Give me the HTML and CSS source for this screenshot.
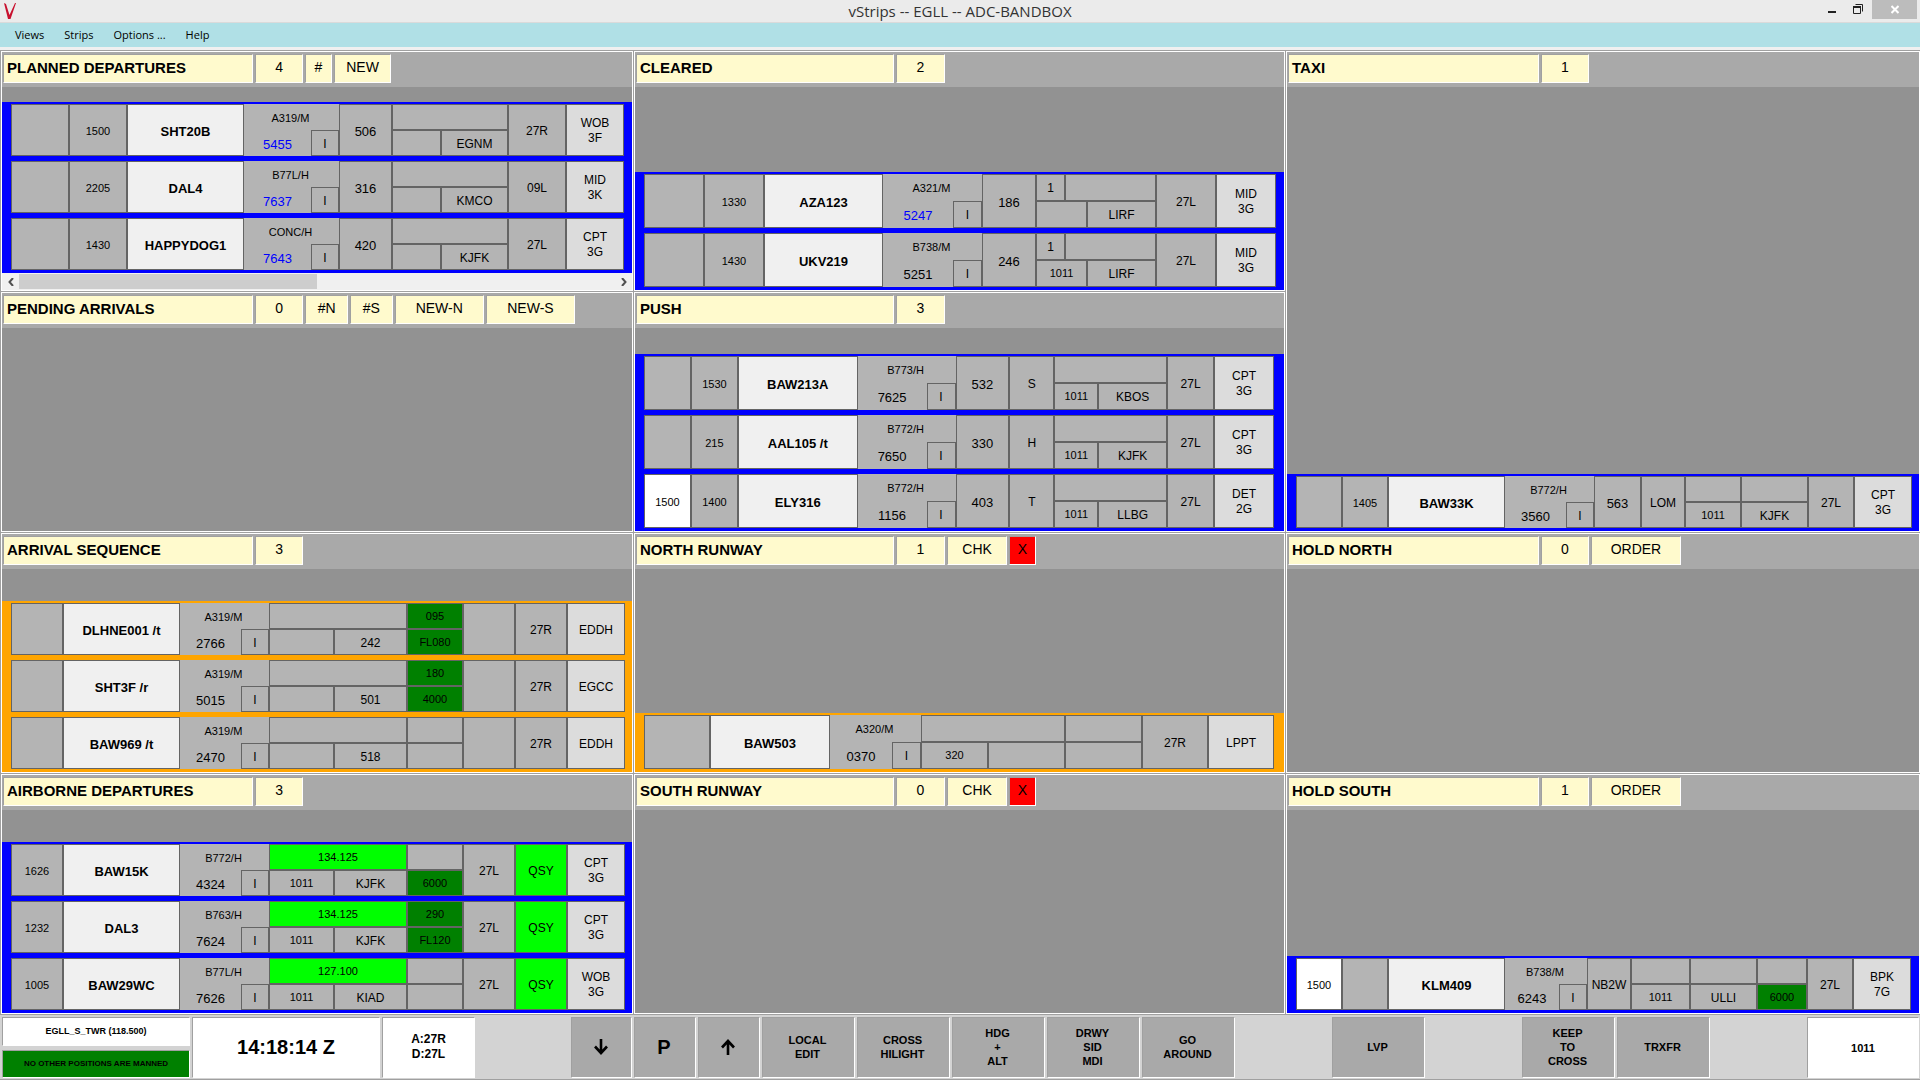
FILE: index.html
```html
<!DOCTYPE html>
<html lang="en">
<head>
<meta charset="utf-8">
<title>vStrips -- EGLL -- ADC-BANDBOX</title>
<link rel="stylesheet" href="styles.css">
</head>
<body>
<div class="app">
  <header class="titlebar">
    <svg class="logo" viewBox="0 0 14 18" aria-hidden="true"><path d="M0 0 L2 1 L5.500 12 L11 0 L12 0 L6.500 16 L4 16 Z" fill="#c8102e"/></svg>
    <h1 class="title">vStrips -- EGLL -- ADC-BANDBOX</h1>
    <div class="controls">
      <button class="ctl" aria-label="Minimise"><svg width="8" height="20" viewBox="0 0 8 20"><path d="M0 11h8v2H0z" fill="#222"/></svg></button>
      <button class="ctl" aria-label="Restore"><svg width="10" height="20" viewBox="0 0 10 20"><path d="M2.500 4.500h7v7M0.500 7v6.500h7V7" fill="none" stroke="#222"/><path d="M0 6h8v2H0z" fill="#222"/></svg></button>
      <button class="ctl close" aria-label="Close"><svg width="8" height="19" viewBox="0 0 8 19"><path d="M0.500 6l7 7M7.500 6l-7 7" stroke="#fff" stroke-width="2"/></svg></button>
    </div>
  </header>
  <nav class="menubar">
    <button>Views</button>
    <button>Strips</button>
    <button>Options ...</button>
    <button>Help</button>
  </nav>

  <main class="board">
    <section class="panel">
      <div class="head"><h2 class="name">PLANNED DEPARTURES</h2><span class="tag count">4</span><button class="tag hash">#</button><button class="tag short">NEW</button></div>
      <div class="bay">
        <div class="strip planned">
          <div class="cell tall"></div><div class="cell tall small">1500</div><div class="cell tall call">SHT20B</div><div class="type">A319/M</div><div class="cell tall num">506</div><div class="cell span2"></div><div class="cell tall">27R</div><div class="cell tall sid">WOB<br>3F</div>
          <div class="sqk new">5455</div><div class="cell low">I</div><div class="cell"></div><div class="cell low">EGNM</div>
        </div>
        <div class="strip planned">
          <div class="cell tall"></div><div class="cell tall small">2205</div><div class="cell tall call">DAL4</div><div class="type">B77L/H</div><div class="cell tall num">316</div><div class="cell span2"></div><div class="cell tall">09L</div><div class="cell tall sid">MID<br>3K</div>
          <div class="sqk new">7637</div><div class="cell low">I</div><div class="cell"></div><div class="cell low">KMCO</div>
        </div>
        <div class="strip planned">
          <div class="cell tall"></div><div class="cell tall small">1430</div><div class="cell tall call">HAPPYDOG1</div><div class="type">CONC/H</div><div class="cell tall num">420</div><div class="cell span2"></div><div class="cell tall">27L</div><div class="cell tall sid">CPT<br>3G</div>
          <div class="sqk new">7643</div><div class="cell low">I</div><div class="cell"></div><div class="cell low">KJFK</div>
        </div>
      </div>
      <div class="scroll">
        <button aria-label="Scroll left"><svg width="6" height="8" viewBox="0 0 6 8"><path d="M5 0L1.500 4L5 8" fill="none" stroke="#505050" stroke-width="2"/></svg></button>
        <div class="track"><div class="thumb"></div></div>
        <button aria-label="Scroll right"><svg width="6" height="8" viewBox="0 0 6 8"><path d="M1 0L4.500 4L1 8" fill="none" stroke="#505050" stroke-width="2"/></svg></button>
      </div>
    </section>

    <section class="panel">
      <div class="head"><h2 class="name">CLEARED</h2><span class="tag count">2</span></div>
      <div class="bay roomy">
        <div class="strip cleared">
          <div class="cell tall"></div><div class="cell tall small">1330</div><div class="cell tall call">AZA123</div><div class="type">A321/M</div><div class="cell tall num">186</div><div class="cell low">1</div><div class="cell span2"></div><div class="cell tall">27L</div><div class="cell tall sid">MID<br>3G</div>
          <div class="sqk new">5247</div><div class="cell low">I</div><div class="cell span2"></div><div class="cell low">LIRF</div>
        </div>
        <div class="strip cleared">
          <div class="cell tall"></div><div class="cell tall small">1430</div><div class="cell tall call">UKV219</div><div class="type">B738/M</div><div class="cell tall num">246</div><div class="cell low">1</div><div class="cell span2"></div><div class="cell tall">27L</div><div class="cell tall sid">MID<br>3G</div>
          <div class="sqk">5251</div><div class="cell low">I</div><div class="cell span2 small">1011</div><div class="cell low">LIRF</div>
        </div>
      </div>
    </section>

    <section class="panel double">
      <div class="head"><h2 class="name">TAXI</h2><span class="tag count">1</span></div>
      <div class="bay">
        <div class="strip taxi">
          <div class="cell tall"></div><div class="cell tall small">1405</div><div class="cell tall call">BAW33K</div><div class="type">B772/H</div><div class="cell tall num">563</div><div class="cell tall">LOM</div><div class="cell"></div><div class="cell"></div><div class="cell tall">27L</div><div class="cell tall sid">CPT<br>3G</div>
          <div class="sqk">3560</div><div class="cell low">I</div><div class="cell small">1011</div><div class="cell low">KJFK</div>
        </div>
      </div>
    </section>

    <section class="panel">
      <div class="head"><h2 class="name">PENDING ARRIVALS</h2><span class="tag count">0</span><button class="tag dir">#N</button><button class="tag dir">#S</button><button class="tag long">NEW-N</button><button class="tag long">NEW-S</button></div>
    </section>

    <section class="panel">
      <div class="head"><h2 class="name">PUSH</h2><span class="tag count">3</span></div>
      <div class="bay roomy">
        <div class="strip push">
          <div class="cell tall"></div><div class="cell tall small">1530</div><div class="cell tall call">BAW213A</div><div class="type">B773/H</div><div class="cell tall num">532</div><div class="cell tall">S</div><div class="cell span2"></div><div class="cell tall">27L</div><div class="cell tall sid">CPT<br>3G</div>
          <div class="sqk">7625</div><div class="cell low">I</div><div class="cell small">1011</div><div class="cell low">KBOS</div>
        </div>
        <div class="strip push">
          <div class="cell tall"></div><div class="cell tall small">215</div><div class="cell tall call">AAL105 /t</div><div class="type">B772/H</div><div class="cell tall num">330</div><div class="cell tall">H</div><div class="cell span2"></div><div class="cell tall">27L</div><div class="cell tall sid">CPT<br>3G</div>
          <div class="sqk">7650</div><div class="cell low">I</div><div class="cell small">1011</div><div class="cell low">KJFK</div>
        </div>
        <div class="strip push">
          <div class="cell tall small white">1500</div><div class="cell tall small">1400</div><div class="cell tall call">ELY316</div><div class="type">B772/H</div><div class="cell tall num">403</div><div class="cell tall">T</div><div class="cell span2"></div><div class="cell tall">27L</div><div class="cell tall sid">DET<br>2G</div>
          <div class="sqk">1156</div><div class="cell low">I</div><div class="cell small">1011</div><div class="cell low">LLBG</div>
        </div>
      </div>
    </section>

    <section class="panel">
      <div class="head"><h2 class="name">ARRIVAL SEQUENCE</h2><span class="tag count">3</span></div>
      <div class="bay inbound">
        <div class="strip airborne">
          <div class="cell tall"></div><div class="cell tall call">DLHNE001 /t</div><div class="type">A319/M</div><div class="cell span2"></div><div class="cell small green">095</div><div class="cell tall"></div><div class="cell tall">27R</div><div class="cell tall sid">EDDH</div>
          <div class="sqk">2766</div><div class="cell low">I</div><div class="cell"></div><div class="cell low">242</div><div class="cell small green">FL080</div>
        </div>
        <div class="strip airborne">
          <div class="cell tall"></div><div class="cell tall call">SHT3F /r</div><div class="type">A319/M</div><div class="cell span2"></div><div class="cell small green">180</div><div class="cell tall"></div><div class="cell tall">27R</div><div class="cell tall sid">EGCC</div>
          <div class="sqk">5015</div><div class="cell low">I</div><div class="cell"></div><div class="cell low">501</div><div class="cell small green">4000</div>
        </div>
        <div class="strip airborne">
          <div class="cell tall"></div><div class="cell tall call">BAW969 /t</div><div class="type">A319/M</div><div class="cell span2"></div><div class="cell"></div><div class="cell tall"></div><div class="cell tall">27R</div><div class="cell tall sid">EDDH</div>
          <div class="sqk">2470</div><div class="cell low">I</div><div class="cell"></div><div class="cell low">518</div><div class="cell"></div>
        </div>
      </div>
    </section>

    <section class="panel">
      <div class="head"><h2 class="name">NORTH RUNWAY</h2><span class="tag count">1</span><button class="tag short">CHK</button><button class="tag hash stop">X</button></div>
      <div class="bay roomy inbound">
        <div class="strip runway">
          <div class="cell tall"></div><div class="cell tall call">BAW503</div><div class="type">A320/M</div><div class="cell span2"></div><div class="cell"></div><div class="cell tall">27R</div><div class="cell tall sid">LPPT</div>
          <div class="sqk">0370</div><div class="cell low">I</div><div class="cell small">320</div><div class="cell"></div><div class="cell"></div>
        </div>
      </div>
    </section>

    <section class="panel">
      <div class="head"><h2 class="name">HOLD NORTH</h2><span class="tag count">0</span><button class="tag long">ORDER</button></div>
    </section>

    <section class="panel">
      <div class="head"><h2 class="name">AIRBORNE DEPARTURES</h2><span class="tag count">3</span></div>
      <div class="bay">
        <div class="strip airborne">
          <div class="cell tall small">1626</div><div class="cell tall call">BAW15K</div><div class="type">B772/H</div><div class="cell span2 small lime">134.125</div><div class="cell"></div><div class="cell tall">27L</div><div class="cell tall lime">QSY</div><div class="cell tall sid">CPT<br>3G</div>
          <div class="sqk">4324</div><div class="cell low">I</div><div class="cell small">1011</div><div class="cell low">KJFK</div><div class="cell small green">6000</div>
        </div>
        <div class="strip airborne">
          <div class="cell tall small">1232</div><div class="cell tall call">DAL3</div><div class="type">B763/H</div><div class="cell span2 small lime">134.125</div><div class="cell small green">290</div><div class="cell tall">27L</div><div class="cell tall lime">QSY</div><div class="cell tall sid">CPT<br>3G</div>
          <div class="sqk">7624</div><div class="cell low">I</div><div class="cell small">1011</div><div class="cell low">KJFK</div><div class="cell small green">FL120</div>
        </div>
        <div class="strip airborne">
          <div class="cell tall small">1005</div><div class="cell tall call">BAW29WC</div><div class="type">B77L/H</div><div class="cell span2 small lime">127.100</div><div class="cell"></div><div class="cell tall">27L</div><div class="cell tall lime">QSY</div><div class="cell tall sid">WOB<br>3G</div>
          <div class="sqk">7626</div><div class="cell low">I</div><div class="cell small">1011</div><div class="cell low">KIAD</div><div class="cell"></div>
        </div>
      </div>
    </section>

    <section class="panel">
      <div class="head"><h2 class="name">SOUTH RUNWAY</h2><span class="tag count">0</span><button class="tag short">CHK</button><button class="tag hash stop">X</button></div>
    </section>

    <section class="panel">
      <div class="head"><h2 class="name">HOLD SOUTH</h2><span class="tag count">1</span><button class="tag long">ORDER</button></div>
      <div class="bay">
        <div class="strip hold">
          <div class="cell tall small white">1500</div><div class="cell tall"></div><div class="cell tall call">KLM409</div><div class="type">B738/M</div><div class="cell tall">NB2W</div><div class="cell"></div><div class="cell"></div><div class="cell"></div><div class="cell tall">27L</div><div class="cell tall sid">BPK<br>7G</div>
          <div class="sqk">6243</div><div class="cell low">I</div><div class="cell small">1011</div><div class="cell low">ULLI</div><div class="cell small green">6000</div>
        </div>
      </div>
    </section>
  </main>

  <footer class="toolbar">
    <div class="position">
      <div class="box station">EGLL_S_TWR (118.500)</div>
      <div class="box manned">NO OTHER POSITIONS ARE MANNED</div>
    </div>
    <div class="box clock">14:18:14 Z</div>
    <div class="box runways">A:27R<br>D:27L</div>
    <span></span>
    <button class="box key" aria-label="Down"><svg width="14" height="16" viewBox="0 0 14 16"><path d="M7 0v14M1 7.500l6 6.500l6-6.500" fill="none" stroke="#000" stroke-width="2.600"/></svg></button>
    <button class="box key letter">P</button>
    <button class="box key" aria-label="Up"><svg width="14" height="16" viewBox="0 0 14 16"><path d="M7 16V2M1 8.500l6-6.500l6 6.500" fill="none" stroke="#000" stroke-width="2.600"/></svg></button>
    <button class="box key">LOCAL<br>EDIT</button>
    <button class="box key">CROSS<br>HILIGHT</button>
    <button class="box key">HDG<br>+<br>ALT</button>
    <button class="box key">DRWY<br>SID<br>MDI</button>
    <button class="box key">GO<br>AROUND</button>
    <span></span>
    <button class="box key">LVP</button>
    <span></span>
    <button class="box key">KEEP<br>TO<br>CROSS</button>
    <button class="box key">TRXFR</button>
    <span></span>
    <div class="box">1011</div>
  </footer>
</div>
</body>
</html>
```
FILE: styles.css
```css
* { box-sizing: border-box; }

body {
  margin: 0;
  font: 12px/15px "Liberation Sans", Arial, sans-serif;
  color: #000;
}

button {
  margin: 0;
  padding: 0;
  border: 0;
  background: none;
  font: inherit;
  color: inherit;
}

svg { display: block; }

.app {
  display: flex;
  flex-direction: column;
  min-height: 100vh;
  background: #f0f0f0;
}

/* Window title bar */
.titlebar {
  display: grid;
  grid-template-columns: 1fr auto 1fr;
  height: 23px;
  background: #ebebeb;
  border-bottom: 1px solid #dadada;
}
.logo { width: 14px; height: 18px; margin: 3px 0 0 4px; }
.title {
  margin: 0;
  font: 15px/23px "Open Sans", "Noto Sans", sans-serif;
  color: #333;
}
.controls {
  display: flex;
  justify-content: flex-end;
  align-items: flex-start;
  gap: 17px;
  padding-right: 3px;
}
.close {
  display: flex;
  justify-content: center;
  width: 45px;
  height: 19px;
  margin-left: -8px;
  background: #bcbcbc;
}

.menubar {
  display: flex;
  gap: 20px;
  height: 24px;
  margin-bottom: 3px;
  padding-left: 15px;
  background: #b0e0e6;
  font: 11px/24px "Open Sans", "Noto Sans", sans-serif;
}

/* Bays */
.board {
  flex: 1;
  display: grid;
  grid-template-columns: 632fr 651fr 634fr;
  grid-template-rows: repeat(4, 1fr);
  gap: 1px;
  padding: 1px 0 1px 1px;
  background: #a0a0a0;
}
.panel {
  display: flex;
  flex-direction: column;
  min-width: 0;
  border: 1px solid #fff;
  background: #929292;
}
.double { grid-row: span 2; }

.head {
  display: flex;
  gap: 2px;
  height: 35px;
  padding: 2px 1px 4px;
  background: #a9a9a9;
}
.name, .tag {
  height: 29px;
  margin: 0;
  padding-bottom: 2px;
  border: 1px solid;
  border-color: #a0a0a0 #fff #fff #a0a0a0;
  background: #fffacd;
  font-size: 14px;
  line-height: 25px;
  text-align: center;
}
.name {
  width: 39.8%;
  padding-left: 3px;
  font-size: 15px;
  text-align: left;
}
.count { width: 7.7%; }
.hash { width: 4.2%; }
.dir { width: 6.8%; }
.short { width: 9.2%; }
.long { width: 14.2%; }
.stop { background: #f00; }

/* Flight strips */
.bay {
  --edge: #00f;
  --row: 26px;
  margin-top: auto;
}
.roomy { --row: 27px; }
.inbound { --edge: #ffa500; }

.strip {
  display: grid;
  grid-template-rows: var(--row) var(--row);
  padding: 2px 8px 3px 9px;
  background: var(--edge);
}
.planned { grid-template-columns: 58fr 58fr 117fr 67fr 28fr 53fr 49fr 67fr 58fr 58fr; }
.cleared { grid-template-columns: 60fr 60fr 119fr 70fr 29fr 54fr 29fr 22fr 69fr 60fr 60fr; }
.push { grid-template-columns: 47fr 47fr 120fr 69fr 29fr 54fr 45fr 44fr 69fr 47fr 60fr; }
.taxi { grid-template-columns: 46fr 46fr 117fr 61fr 28fr 47fr 44fr 56fr 67fr 46fr 58fr; }
.airborne { grid-template-columns: 52fr 117fr 61fr 28fr 65fr 73fr 56fr 52fr 52fr 58fr; }
.runway { grid-template-columns: 66fr 120fr 62fr 29fr 67fr 77fr 77fr 66fr 66fr; }
.hold { grid-template-columns: 46fr 46fr 117fr 54fr 28fr 44fr 59fr 67fr 50fr 46fr 58fr; }
.push, .runway { padding-right: 10px; }
.airborne, .taxi { padding-right: 7px; }

.cell, .type, .sqk {
  display: flex;
  align-items: center;
  justify-content: center;
  min-width: 0;
  background: #b4b4b4;
  text-align: center;
}
.cell { border: 1px solid #646464; }
.tall { grid-row: span 2; padding-top: 2px; }
.span2 { grid-column: span 2; }
.type { grid-column: span 2; padding: 2px 2px 0 0; font-size: 11px; }
.sqk, .num { font-size: 13px; }
.sqk, .low { padding-top: 2px; }
.small { font-size: 11px; }
.new { color: #00f; }
.call { background: #f0f0f0; font-size: 13px; font-weight: bold; }
.sid { background: #dcdcdc; }
.white { background: #fff; }
.green { background: #008000; }
.lime { background: #0f0; }

.scroll {
  display: flex;
  height: 17px;
  background: #f0f0f0;
}
.scroll button {
  display: grid;
  place-items: center;
  width: 17px;
}
.track { flex: 1; }
.thumb { width: 50%; height: 15px; margin-top: 1px; background: #cdcdcd; }

/* Bottom toolbar */
.toolbar {
  display: grid;
  grid-template-columns: 188fr 188fr 93fr 92fr 61fr 62fr 62fr repeat(11, 93fr) 112fr;
  gap: 2px;
  height: 65px;
  padding: 2px 1px 1px 2px;
  border-bottom: 1px solid #a0a0a0;
  background: #d3d3d3;
  font-size: 11px;
  font-weight: bold;
  line-height: 14px;
}
.box {
  display: flex;
  align-items: center;
  justify-content: center;
  min-width: 0;
  border: 1px solid;
  border-color: #a0a0a0 #fff #fff #a0a0a0;
  background: #fff;
  text-align: center;
}
.key { padding: 0 2px 2px 0; background: #a9a9a9; }
.letter, .clock { font-size: 20px; }
.clock, .runways { padding-bottom: 2px; }
.runways { font-size: 12px; line-height: 15px; }
.position {
  display: grid;
  grid-template-rows: 1fr 1fr;
  gap: 4px;
}
.station { font-size: 9px; }
.manned { background: #008000; font-size: 8px; }
```
